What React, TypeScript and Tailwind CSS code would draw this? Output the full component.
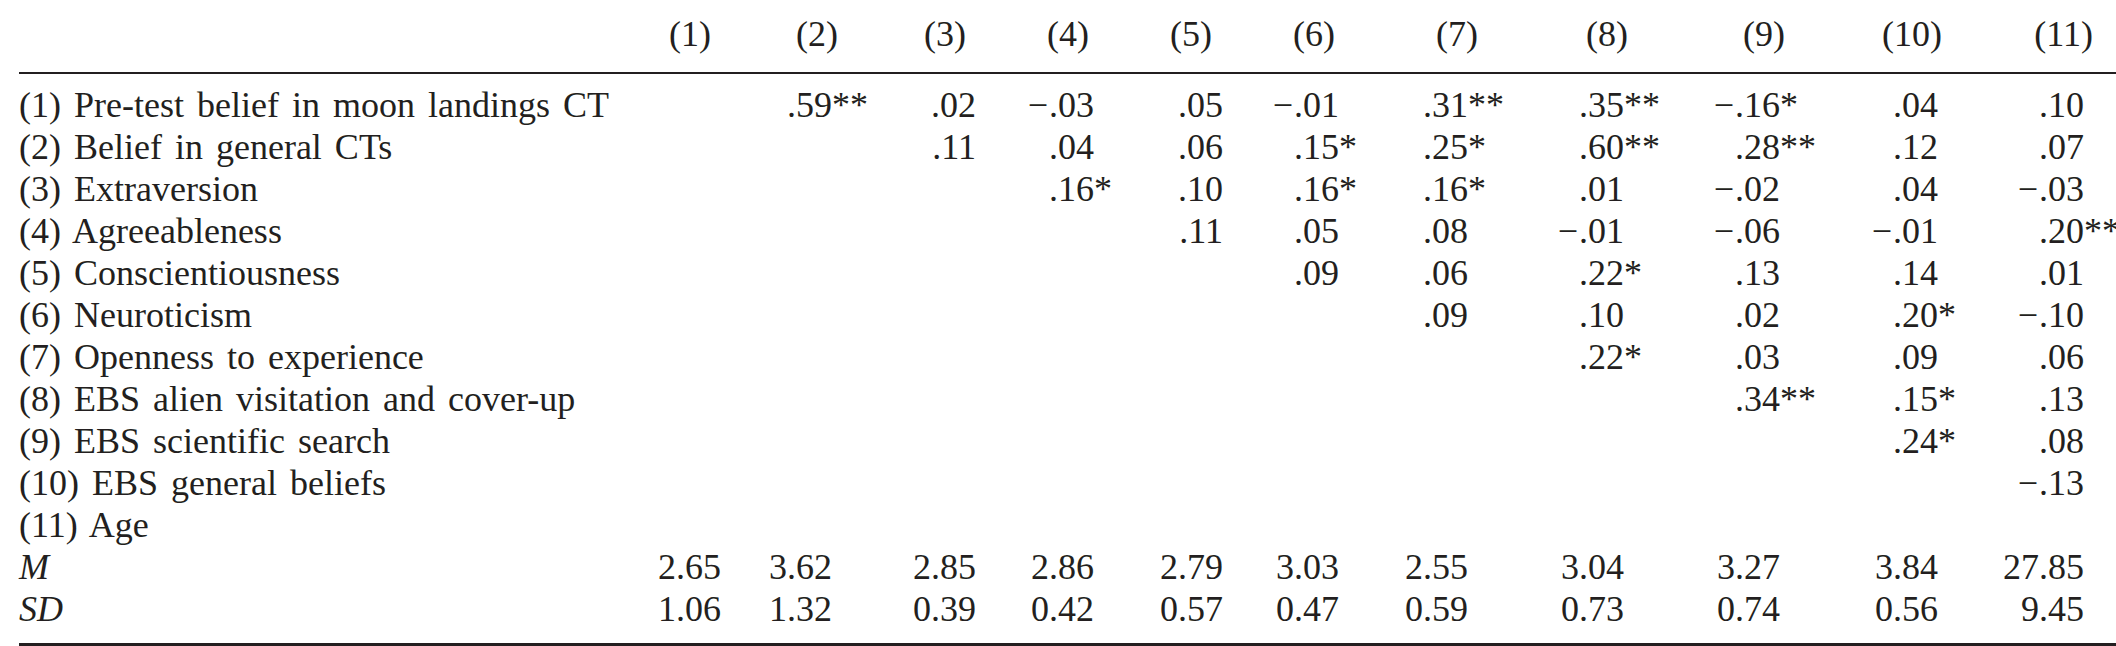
import React from "react";

type Cell = string | null;

const headerPad = [
  "pr-[46px]",
  "pr-[30px]",
  "pr-[46px]",
  "pr-[41px]",
  "pr-[47px]",
  "pr-[40px]",
  "pr-[26px]",
  "pr-[32px]",
  "pr-[31px]",
  "pr-[32px]",
  "pr-[27px]",
];

const rows: { label: React.ReactNode; cells: Cell[] }[] = [
  { label: "(1) Pre-test belief in moon landings CT", cells: [null, ".59**", ".02", "-.03", ".05", "-.01", ".31**", ".35**", "-.16*", ".04", ".10"] },
  { label: "(2) Belief in general CTs", cells: [null, null, ".11", ".04", ".06", ".15*", ".25*", ".60**", ".28**", ".12", ".07"] },
  { label: "(3) Extraversion", cells: [null, null, null, ".16*", ".10", ".16*", ".16*", ".01", "-.02", ".04", "-.03"] },
  { label: "(4) Agreeableness", cells: [null, null, null, null, ".11", ".05", ".08", "-.01", "-.06", "-.01", ".20**"] },
  { label: "(5) Conscientiousness", cells: [null, null, null, null, null, ".09", ".06", ".22*", ".13", ".14", ".01"] },
  { label: "(6) Neuroticism", cells: [null, null, null, null, null, null, ".09", ".10", ".02", ".20*", "-.10"] },
  { label: "(7) Openness to experience", cells: [null, null, null, null, null, null, null, ".22*", ".03", ".09", ".06"] },
  { label: "(8) EBS alien visitation and cover-up", cells: [null, null, null, null, null, null, null, null, ".34**", ".15*", ".13"] },
  { label: "(9) EBS scientific search", cells: [null, null, null, null, null, null, null, null, null, ".24*", ".08"] },
  { label: "(10) EBS general beliefs", cells: [null, null, null, null, null, null, null, null, null, null, "-.13"] },
  { label: "(11) Age", cells: [null, null, null, null, null, null, null, null, null, null, null] },
  { label: <i>M</i>, cells: ["2.65", "3.62", "2.85", "2.86", "2.79", "3.03", "2.55", "3.04", "3.27", "3.84", "27.85"] },
  { label: <i>SD</i>, cells: ["1.06", "1.32", "0.39", "0.42", "0.57", "0.47", "0.59", "0.73", "0.74", "0.56", "9.45"] },
];

const grid =
  "grid grid-cols-[622px_116px_111px_144px_118px_129px_116px_129px_156px_156px_158px_146px]";

// number is right-aligned, stars hang to the right in a fixed slot
const Value = ({ v }: { v: Cell }) => {
  if (!v) return <div />;
  const neg = v.startsWith("-");
  const body = v.replace("-", "").replace(/\*+$/, "");
  const stars = (v.match(/\*+$/) || [""])[0];
  return (
    <div className="flex justify-end">
      {neg && <span className="mr-[1px]">−</span>}
      <span>{body}</span>
      <span className="w-[36px] text-left">{stars}</span>
    </div>
  );
};

export default function App() {
  return (
    <div className="w-[2116px] h-[646px] overflow-hidden bg-white text-[#231f20] font-['Liberation_Serif','Times_New_Roman',serif] text-[36px] leading-[42px]">
      <div className="pl-[19px] pt-[13px]">
        <div className={grid}>
          <div />
          {headerPad.map((pad, i) => (
            <div key={i} className={`flex justify-end ${pad}`}>
              ({i + 1})
            </div>
          ))}
        </div>

        <div className="mt-[17px] h-[2px] bg-[#231f20]" />

        <div className="pt-[10px]">
          {rows.map((row, r) => (
            <div key={r} className={grid}>
              <div className="whitespace-nowrap [word-spacing:4px]">{row.label}</div>
              {row.cells.map((c, i) => (
                <Value key={i} v={c} />
              ))}
            </div>
          ))}
        </div>

        <div className="mt-[13px] h-[3px] bg-[#231f20]" />
      </div>
    </div>
  );
}
